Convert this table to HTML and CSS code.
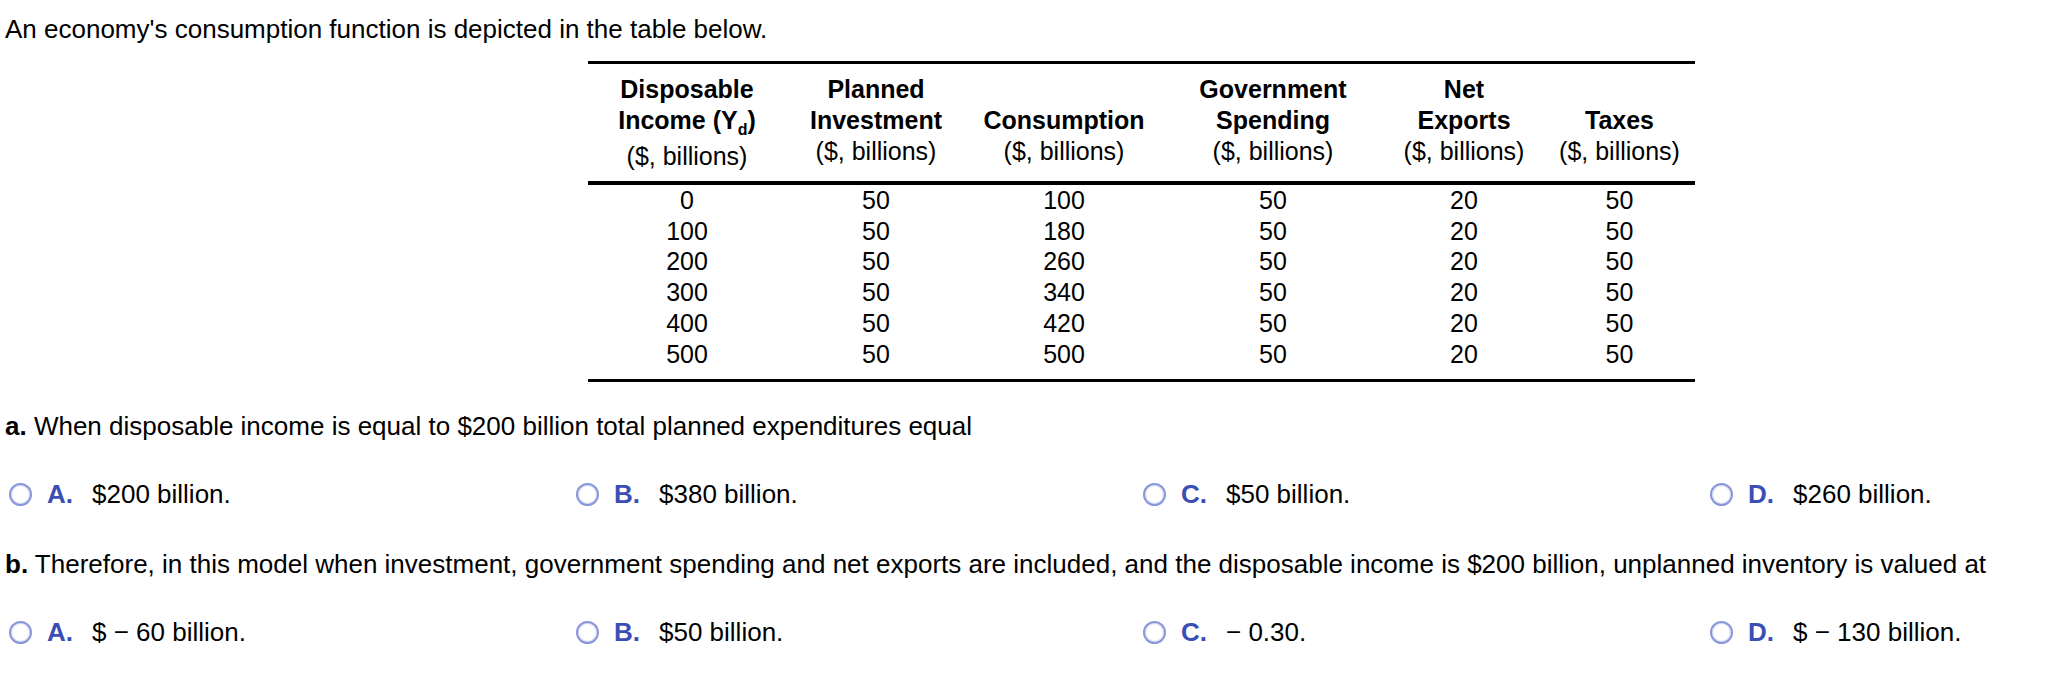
FILE: index.html
```html
<!DOCTYPE html>
<html lang="en">
<head>
<meta charset="utf-8">
<title>Consumption function</title>
<link rel="stylesheet" href="styles.css">
</head>
<body>
<div class="page">
  <p class="intro">An economy's consumption function is depicted in the table below.</p>

  <table class="data">
    <colgroup>
      <col class="c1"><col class="c2"><col class="c3"><col class="c4"><col class="c5"><col class="c6">
    </colgroup>
    <thead>
      <tr>
        <th>Disposable<br>Income (Y<sub>d</sub>)<span class="unit lowered">($, billions)</span></th>
        <th>Planned<br>Investment<span class="unit">($, billions)</span></th>
        <th class="two">Consumption<span class="unit">($, billions)</span></th>
        <th>Government<br>Spending<span class="unit">($, billions)</span></th>
        <th>Net<br>Exports<span class="unit">($, billions)</span></th>
        <th class="two">Taxes<span class="unit">($, billions)</span></th>
      </tr>
    </thead>
    <tbody>
      <tr><td>0</td><td>50</td><td>100</td><td>50</td><td>20</td><td>50</td></tr>
      <tr><td>100</td><td>50</td><td>180</td><td>50</td><td>20</td><td>50</td></tr>
      <tr><td>200</td><td>50</td><td>260</td><td>50</td><td>20</td><td>50</td></tr>
      <tr><td>300</td><td>50</td><td>340</td><td>50</td><td>20</td><td>50</td></tr>
      <tr><td>400</td><td>50</td><td>420</td><td>50</td><td>20</td><td>50</td></tr>
      <tr class="last"><td>500</td><td>50</td><td>500</td><td>50</td><td>20</td><td>50</td></tr>
    </tbody>
  </table>

  <p class="question first"><b>a.</b> When disposable income is equal to $200 billion total planned expenditures equal</p>
  <div class="options">
    <div class="option"><span class="radio"></span><span class="letter">A.</span><span class="answer">$200 billion.</span></div>
    <div class="option"><span class="radio"></span><span class="letter">B.</span><span class="answer">$380 billion.</span></div>
    <div class="option"><span class="radio"></span><span class="letter">C.</span><span class="answer">$50 billion.</span></div>
    <div class="option"><span class="radio"></span><span class="letter">D.</span><span class="answer">$260 billion.</span></div>
  </div>

  <p class="question"><b>b.</b> Therefore, in this model when investment, government spending and net exports are included, and the disposable income is $200 billion, unplanned inventory is valued at</p>
  <div class="options">
    <div class="option"><span class="radio"></span><span class="letter">A.</span><span class="answer">$ − 60 billion.</span></div>
    <div class="option"><span class="radio"></span><span class="letter">B.</span><span class="answer">$50 billion.</span></div>
    <div class="option"><span class="radio"></span><span class="letter">C.</span><span class="answer">− 0.30.</span></div>
    <div class="option"><span class="radio"></span><span class="letter">D.</span><span class="answer">$ − 130 billion.</span></div>
  </div>
</div>
</body>
</html>
```

FILE: styles.css
```css
html, body {
  margin: 0;
  padding: 0;
  background: #ffffff;
}

body {
  font-family: "Liberation Sans", Arial, Helvetica, sans-serif;
  color: #000000;
}

.page {
  padding: 14px 0 0 5px;
}

.intro {
  margin: 0;
  font-size: 26px;
  line-height: 30px;
}

.data {
  margin: 17px 0 0 583px;
  border-collapse: separate;
  border-spacing: 0;
  border-top: 3px solid #000;
  border-bottom: 3px solid #000;
  table-layout: fixed;
  width: 1107px;
  font-size: 25px;
}

.c1 { width: 198px; }
.c2 { width: 180px; }
.c3 { width: 196px; }
.c4 { width: 222px; }
.c5 { width: 160px; }
.c6 { width: 151px; }

.data th {
  font-weight: bold;
  vertical-align: top;
  text-align: center;
  line-height: 31px;
  padding: 10px 0 9px;
  border-bottom: 4px solid #000;
  white-space: nowrap;
}

.data th.two {
  padding-top: 41px;
}

.data th sub {
  font-size: 16px;
  line-height: 0;
  vertical-align: -6px;
}

.unit {
  display: block;
  font-weight: normal;
}

.unit.lowered {
  margin-top: 5px;
}

.data td {
  text-align: center;
  line-height: 30.7px;
  padding: 0;
}

.data tr.last td {
  padding-bottom: 10px;
}

.question {
  margin: 40px 0 0;
  font-size: 26px;
  line-height: 30px;
}

.question.first {
  margin-top: 29px;
}

.options {
  display: grid;
  grid-template-columns: 567px 567px 567px 1fr;
  margin-top: 38px;
  height: 30px;
  align-items: center;
}

.option {
  display: flex;
  align-items: center;
}

.radio {
  width: 23px;
  height: 23px;
  box-sizing: border-box;
  border-radius: 50%;
  border: 2px solid #8896da;
  box-shadow: inset 0 0 1px 1px rgba(170, 180, 232, 0.5);
  margin-left: 4px;
  flex: none;
}

.letter {
  margin-left: 15px;
  width: 45px;
  font-size: 26px;
  font-weight: bold;
  color: #3b4eb6;
  line-height: 30px;
}

.answer {
  font-size: 26px;
  line-height: 30px;
}
```
